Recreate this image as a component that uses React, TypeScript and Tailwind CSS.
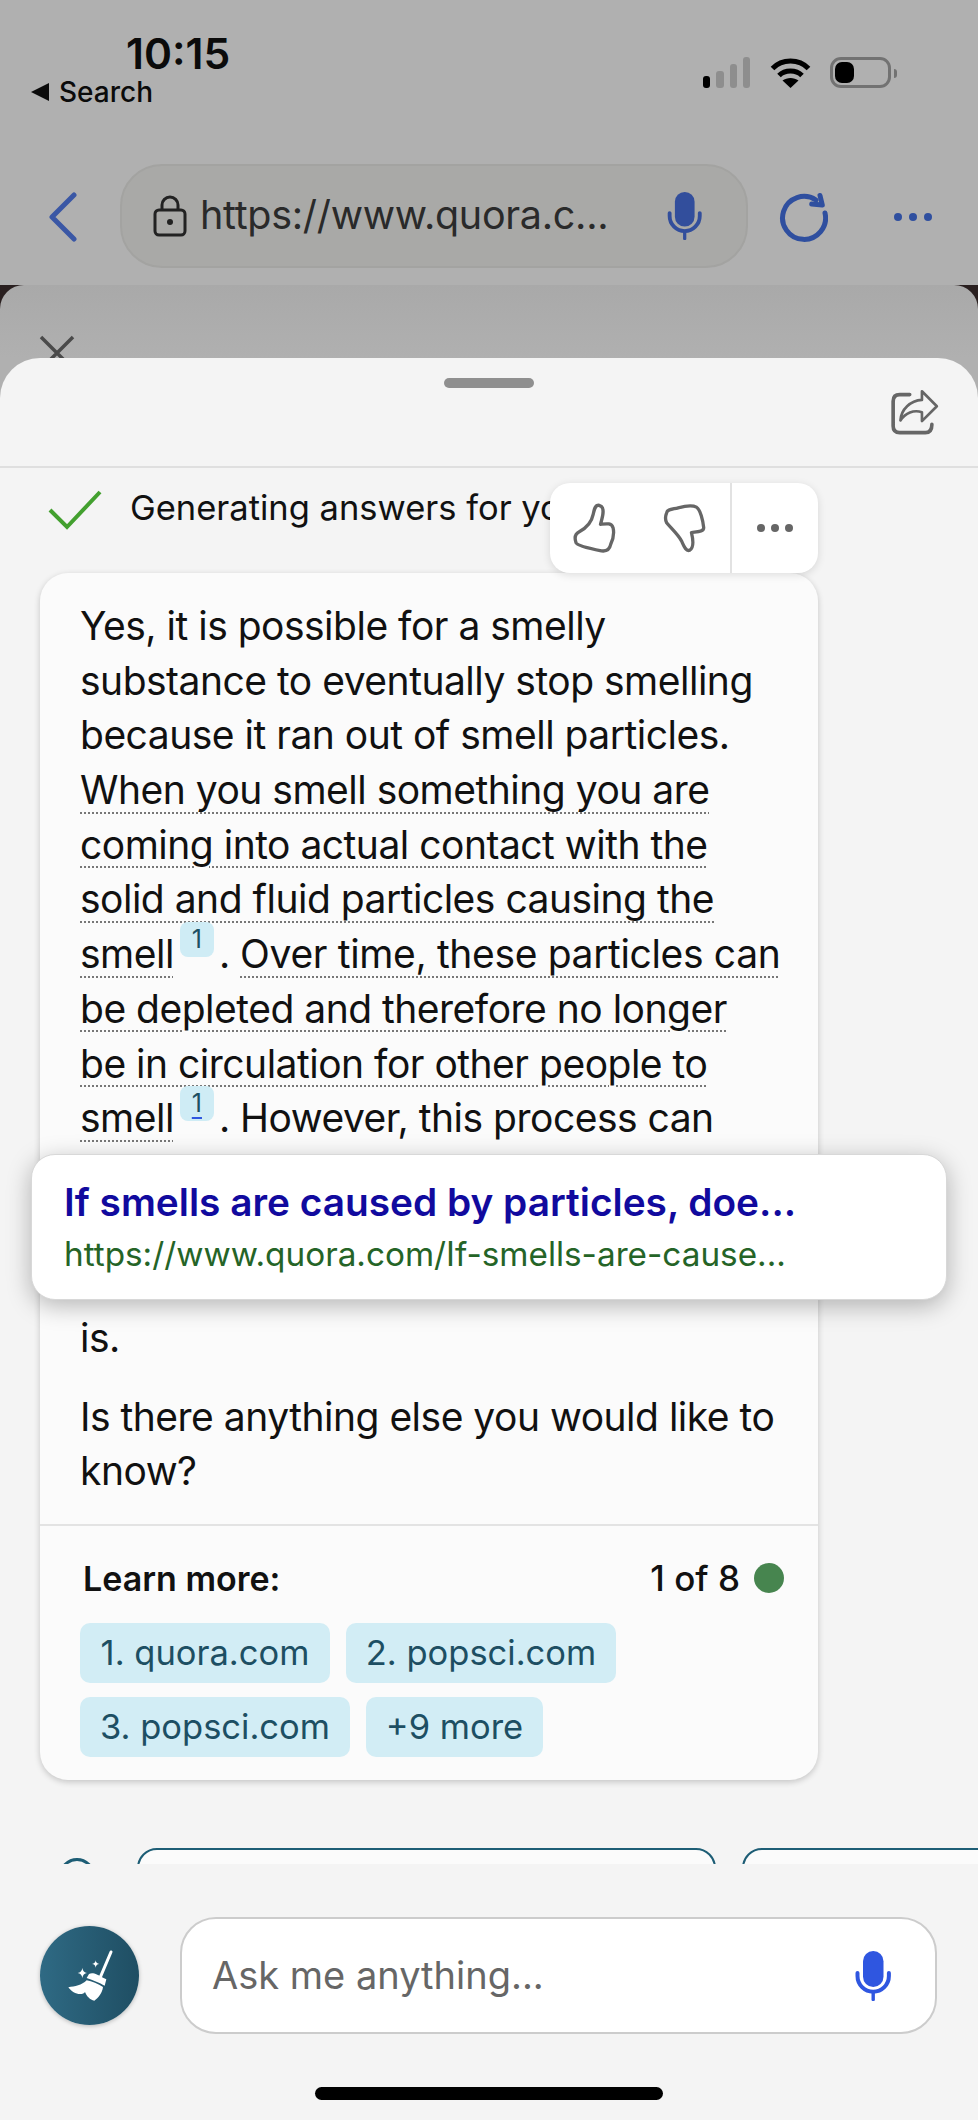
import React from "react";

const FONT = "font-['Inter','Noto_Sans',sans-serif]";
const DOTTED = "underline decoration-dotted decoration-[#777] decoration-[2px] underline-offset-[8px]";

const Mic = ({ className, color }: any) => (
  <svg viewBox="0 0 36 50" className={className}>
    <rect x="8" y="0" width="20.5" height="36" rx="10.2" fill={color} />
    <path d="M2.5 22V25a15.7 15.7 0 0 0 31.4 0V22" fill="none" stroke={color} strokeWidth="4" strokeLinecap="round" />
    <path d="M18.2 41V48.5" fill="none" stroke={color} strokeWidth="3.4" strokeLinecap="round" />
  </svg>
);

const Cite = ({ active }: any) => (
  <span className="relative -top-[20px] inline-flex w-[34px] h-[35px] ml-[6px] mr-[5px] justify-center rounded-[8px] bg-[#cfecf5] text-[25px] leading-[35px] tracking-normal text-[#1d4f63]">
    <span className={active ? "underline decoration-[#2f56e0] decoration-[2px] underline-offset-[5px]" : ""}>1</span>
  </span>
);

const Line = ({ children }: any) => <div className="h-[54.7px] whitespace-nowrap">{children}</div>;

const Chip = ({ children, className }: any) => (
  <span className={`flex h-[60px] items-center justify-center rounded-[10px] bg-[#d2edf5] text-[34.5px] text-[#1d4f63] ${className}`}>
    {children}
  </span>
);

export default function App() {
  return (
    <div className={`relative flex h-[2120px] w-[978px] flex-col overflow-hidden bg-[#b0b0b0] ${FONT}`}>
      {/* status bar */}
      <header className="flex h-[164px] shrink-0 justify-between">
        <div className="pl-[31px] pt-[30px]">
          <div className="pl-[95px] text-[42.5px] font-semibold leading-[48px] text-[#0b0b0b]">10:15</div>
          <div className="flex items-center gap-[10px] text-[28px] font-medium leading-[28px] text-[#0b0b0b]">
            <span className="h-0 w-0 border-y-[9px] border-r-[18px] border-y-transparent border-r-[#0b0b0b]"></span>
            Search
          </div>
        </div>
        <div className="flex h-[31px] items-end pr-[81px] pt-0 mt-[57px]">
          <div className="flex items-end gap-[6px]">
            <span className="h-[12px] w-[7px] rounded-[3px] bg-black"></span>
            <span className="h-[17px] w-[8px] rounded-[3px] bg-[#8e8e8e]"></span>
            <span className="h-[24px] w-[7px] rounded-[3px] bg-[#8e8e8e]"></span>
            <span className="h-[31px] w-[7px] rounded-[3px] bg-[#8e8e8e]"></span>
          </div>
          <svg viewBox="0 0 41 31" className="ml-[20px] h-[31px] w-[41px]">
            <path d="M2.5 11.5C12 1.5 29 1.5 38.5 11.5" fill="none" stroke="#000" strokeWidth="5" />
            <path d="M9 18.5C15 12.5 26 12.5 32 18.5" fill="none" stroke="#000" strokeWidth="5" />
            <path d="M20.5 31L12.5 23.5C17 20 24 20 28.5 23.5Z" fill="#000" />
          </svg>
          <div className="ml-[19px] flex h-[31px] w-[61px] items-center rounded-[11px] border-[3px] border-[#727272] pl-[2px]">
            <span className="h-[21px] w-[19px] rounded-[7px] bg-black"></span>
          </div>
          <span className="mb-[10px] ml-[3px] h-[9px] w-[3px] rounded-r-full bg-[#727272]"></span>
        </div>
      </header>

      {/* browser toolbar */}
      <nav className="flex h-[121px] shrink-0 items-start">
        <svg viewBox="0 0 30 50" className="ml-[48px] mt-[28px] h-[50px] w-[30px]">
          <path d="M26 3L4 25L26 47" fill="none" stroke="#3a57a5" strokeWidth="5" strokeLinecap="round" strokeLinejoin="round" />
        </svg>
        <div className="ml-[42px] flex h-[104px] w-[628px] items-center rounded-[42px] border-2 border-[#a3a3a1] bg-[#a9a9a7]">
          <svg viewBox="0 0 34 42" className="ml-[31px] h-[42px] w-[34px]">
            <rect x="2" y="15" width="30" height="25" rx="4" fill="none" stroke="#222" strokeWidth="3" />
            <path d="M9 15V10a8 8 0 0 1 16 0V15" fill="none" stroke="#222" strokeWidth="3" />
            <circle cx="17" cy="27" r="3" fill="#222" />
          </svg>
          <span className="ml-[13px] w-[410px] whitespace-nowrap text-[39.5px] tracking-[-0.3px] text-[#2a2a2a]">https://www.quora.c...</span>
          <Mic className="ml-[57px] h-[48px] w-[35px]" color="#324e9c" />
        </div>
        <svg viewBox="0 0 50 50" className="ml-[30px] mt-[28px] h-[50px] w-[50px]">
          <path d="M47 21A21.5 21.5 0 1 1 38 8" fill="none" stroke="#2f4f9f" strokeWidth="5" strokeLinecap="round" />
          <path d="M42 3.5L44.3 13L33.7 12" fill="none" stroke="#2f4f9f" strokeWidth="5" strokeLinecap="round" strokeLinejoin="round" />
        </svg>
        <div className="ml-[66px] mt-[49px] flex gap-[7px]">
          <span className="h-[8px] w-[8px] rounded-full bg-[#2f4f9f]"></span>
          <span className="h-[8px] w-[8px] rounded-full bg-[#2f4f9f]"></span>
          <span className="h-[8px] w-[8px] rounded-full bg-[#2f4f9f]"></span>
        </div>
      </nav>

      {/* sheet behind */}
      <div className="h-[73px] shrink-0 bg-[#2a2020]">
        <div className="h-[73px] overflow-hidden rounded-t-[24px] bg-gradient-to-b from-[#a9a9a9] to-[#b0b0b0] pl-[39px] pt-[50px]">
          <svg viewBox="0 0 36 36" className="h-[36px] w-[36px]">
            <path d="M2 2L34 34M34 2L2 34" fill="none" stroke="#4a4a4a" strokeWidth="3.5" />
          </svg>
        </div>
      </div>
      <div className="flex flex-1 flex-col rounded-t-[40px] bg-[#f4f4f4]">
        {/* sheet head */}
        <div className="h-[110px] shrink-0 border-b-2 border-[#dfdfdf]">
          <div className="mx-auto mt-[20px] h-[10px] w-[90px] rounded-full bg-[#8f8f8f]"></div>
          <div className="flex justify-end pr-[36px]">
            <svg viewBox="50 40 165 145" className="h-[48px] w-[55px]">
              <path d="M118 60H88Q68 60 68 80V155Q68 175 88 175H165Q185 175 185 150" fill="none" stroke="#666" strokeWidth="11" strokeLinecap="round" />
              <path d="M155 50L200 95L155 140V113C130 105 105 115 90 138C92 105 120 78 155 76Z" fill="none" stroke="#666" strokeWidth="8" strokeLinejoin="round" />
            </svg>
          </div>
        </div>

        {/* status line */}
        <div className="flex h-[105px] shrink-0 items-start pl-[48px] pt-[22px]">
          <svg viewBox="0 0 54 40" className="h-[40px] w-[54px]">
            <path d="M2 20L19 37L52 2" fill="none" stroke="#43a02f" strokeWidth="4" />
          </svg>
          <span className="ml-[28px] whitespace-nowrap text-[34.5px] leading-[36px] text-[#111]">Generating answers for you</span>
        </div>

        {/* answer card */}
        <section className="ml-[40px] h-[1207px] w-[778px] shrink-0 rounded-[28px] bg-[#fbfbfb] text-[39px] tracking-[-0.5px] text-[#111] shadow-[0_2px_6px_rgba(0,0,0,0.2)]">
          <div className="h-[951px] pl-[40px] pt-[26px] leading-[54.7px]">
            <Line>Yes, it is possible for a smelly</Line>
            <Line>substance to eventually stop smelling</Line>
            <Line>because it ran out of smell particles.</Line>
            <Line><span className={DOTTED}>When you smell something you are</span></Line>
            <Line><span className={DOTTED}>coming into actual contact with the</span></Line>
            <Line><span className={DOTTED}>solid and fluid particles causing the</span></Line>
            <Line><span className={DOTTED}>smell</span><Cite />. <span className={`${DOTTED} tracking-[-0.35px]`}>Over time, these particles can</span></Line>
            <Line><span className={DOTTED}>be depleted and therefore no longer</span></Line>
            <Line><span className={DOTTED}>be in circulation for other people to</span></Line>
            <Line><span className={DOTTED}>smell</span><Cite active />. However, this process can</Line>
            <div className="h-[165px]"></div>
            <Line>is.</Line>
            <div className="h-[24px]"></div>
            <Line>Is there anything else you would like to</Line>
            <Line>know?</Line>
          </div>
          <div className="h-[99px] border-t-2 border-[#e3e3e3] pl-[43px] pr-[34px] pt-[34px] tracking-normal">
            <div className="flex h-[36px] items-center justify-between">
              <span className="text-[34px] font-semibold">Learn more:</span>
              <span className="flex items-center gap-[14px] text-[35px] font-medium">
                1 of 8
                <span className="h-[30px] w-[30px] rounded-full bg-[#47854f]"></span>
              </span>
            </div>
          </div>
          <div className="flex gap-[16px] pl-[40px] tracking-normal">
            <Chip className="w-[250px]">1. quora.com</Chip>
            <Chip className="w-[270px]">2. popsci.com</Chip>
          </div>
          <div className="mt-[14px] flex gap-[16px] pl-[40px] tracking-normal">
            <Chip className="w-[270px]">3. popsci.com</Chip>
            <Chip className="w-[177px]">+9 more</Chip>
          </div>
        </section>

        {/* suggestions, clipped by the input bar */}
        <div className="mt-[68px] flex h-[16px] shrink-0 overflow-hidden">
          <span className="ml-[59px] mt-[10px] h-[36px] w-[36px] shrink-0 rounded-full border-[3px] border-[#1d5d75]"></span>
          <span className="ml-[42px] h-[40px] w-[579px] shrink-0 rounded-t-[20px] border-2 border-[#1d5d75] bg-[#fbfbfb]"></span>
          <span className="ml-[26px] h-[40px] w-[260px] shrink-0 rounded-t-[20px] border-2 border-[#1d5d75] bg-[#fbfbfb]"></span>
        </div>

        {/* input bar */}
        <div className="mt-[53px] flex items-center pl-[40px]">
          <button className="flex h-[99px] w-[99px] shrink-0 items-center justify-center rounded-full bg-gradient-to-r from-[#2f6a84] to-[#1f4e63] shadow-[0_1px_4px_rgba(0,0,0,0.25)]">
            <svg viewBox="100 100 150 165" className="h-[55px] w-[50px]">
              <path d="M238 112L207 185" stroke="#fff" strokeWidth="9" strokeLinecap="round" />
              <path d="M172 178C182 172 192 176 224 194L219 213C205 205 180 195 165 190Z" fill="#fff" />
              <path d="M165 197C150 212 130 215 110 218C120 232 135 240 150 238C158 237 160 232 160 232C165 245 175 255 188 258C200 250 212 235 214 217C200 208 180 200 165 197Z" fill="#fff" />
              <path d="M152 160Q154 173 166 175Q154 177 152 190Q150 177 138 175Q150 173 152 160Z" fill="#fff" />
              <path d="M192 137Q193 147 203 148Q193 149 192 159Q191 149 181 148Q191 147 192 137Z" fill="#fff" />
            </svg>
          </button>
          <div className="ml-[41px] flex h-[117px] w-[757px] items-center justify-between rounded-[36px] border-2 border-[#cccccc] bg-white pl-[30px] pr-[44px]">
            <span className="text-[38px] text-[#666]">Ask me anything...</span>
            <Mic className="h-[50px] w-[36px]" color="#2f56e0" />
          </div>
        </div>

        <div className="mx-auto mt-[53px] h-[13px] w-[348px] rounded-full bg-black"></div>
      </div>

      {/* feedback popup */}
      <div className="absolute left-[550px] top-[483px] flex h-[90px] w-[268px] items-center rounded-[20px] bg-white shadow-[0_2px_8px_rgba(0,0,0,0.12)]">
        <svg viewBox="60 60 145 165" className="ml-[20px] h-[55px] w-[48px]">
          <path d="M147 72C135 72 133 85 130 100C125 125 108 142 88 152C76 158 73 170 78 185C82 195 130 205 155 210C170 212 180 205 183 190C190 175 195 160 190 140C185 125 170 128 152 130C158 110 165 85 155 76Z" fill="none" stroke="#666" strokeWidth="10" strokeLinejoin="round" />
        </svg>
        <svg viewBox="330 60 145 165" className="ml-[42px] h-[55px] w-[48px]">
          <path d="M350 95C352 85 365 85 385 80C400 76 425 70 440 78C452 85 460 120 462 140C462 152 445 152 425 155C430 175 432 200 420 208C408 213 402 195 395 180C385 160 362 140 350 125C345 115 346 105 350 95Z" fill="none" stroke="#666" strokeWidth="10" strokeLinejoin="round" />
        </svg>
        <span className="ml-[22px] h-full w-[2px] bg-[#e2e2e2]"></span>
        <div className="ml-[25px] flex gap-[6px]">
          <span className="h-[8px] w-[8px] rounded-full bg-[#666]"></span>
          <span className="h-[8px] w-[8px] rounded-full bg-[#666]"></span>
          <span className="h-[8px] w-[8px] rounded-full bg-[#666]"></span>
        </div>
      </div>

      {/* citation tooltip */}
      <div className="absolute left-[31px] top-[1154px] flex h-[146px] w-[916px] flex-col justify-center rounded-[24px] border border-[#d8d8d8] bg-white pl-[32px] pt-[2px] shadow-[0_6px_24px_rgba(0,0,0,0.28)]">
        <div className="text-[38.8px] font-semibold leading-[52px] text-[#110a9e]">If smells are caused by particles, doe...</div>
        <div className="text-[33.3px] leading-[52px] text-[#256427]">https://www.quora.com/If-smells-are-cause...</div>
      </div>
    </div>
  );
}
